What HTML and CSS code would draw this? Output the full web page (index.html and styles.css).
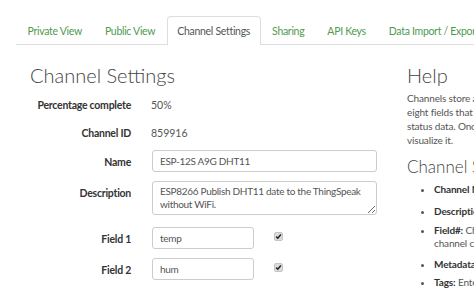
FILE: index.html
```html
<!DOCTYPE html>
<html>
<head>
<meta charset="utf-8">
<link rel="stylesheet" href="styles.css">
</head>
<body>
<div class="page">
  <nav class="tabs">
    <a class="tab">Private View</a>
    <a class="tab">Public View</a>
    <a class="tab active">Channel Settings</a>
    <a class="tab">Sharing</a>
    <a class="tab">API Keys</a>
    <a class="tab">Data Import / Export</a>
  </nav>
  <div class="main">
    <section class="settings">
      <h1 class="title">Channel Settings</h1>
      <div class="row static">
        <div class="label">Percentage complete</div>
        <div class="value">50%</div>
      </div>
      <div class="row static">
        <div class="label">Channel ID</div>
        <div class="value">859916</div>
      </div>
      <div class="row">
        <div class="label">Name</div>
        <div class="control"><input class="input wide" type="text" value="ESP-12S A9G DHT11"></div>
      </div>
      <div class="row tall">
        <div class="label">Description</div>
        <div class="control"><textarea class="input wide area">ESP8266 Publish DHT11 date to the ThingSpeak without WiFi.</textarea></div>
      </div>
      <div class="row">
        <div class="label">Field 1</div>
        <div class="control field">
          <input class="input short" type="text" value="temp">
          <span class="check"><svg width="9" height="9" viewBox="0 0 9 9"><rect x="0.5" y="0.5" width="8" height="8" rx="1.5" fill="#dcdcdc" stroke="#c4c4c4"/><path d="M2.2 4.6 L3.8 6.2 L6.9 2.6" fill="none" stroke="#222" stroke-width="1.5"/></svg></span>
        </div>
      </div>
      <div class="row">
        <div class="label">Field 2</div>
        <div class="control field">
          <input class="input short" type="text" value="hum">
          <span class="check"><svg width="9" height="9" viewBox="0 0 9 9"><rect x="0.5" y="0.5" width="8" height="8" rx="1.5" fill="#dcdcdc" stroke="#c4c4c4"/><path d="M2.2 4.6 L3.8 6.2 L6.9 2.6" fill="none" stroke="#222" stroke-width="1.5"/></svg></span>
        </div>
      </div>
    </section>
    <aside class="help">
      <h1 class="title">Help</h1>
      <p class="text">Channels store all the data that a ThingSpeak application collects. Each channel includes<br>eight fields that can hold any type of data, plus three fields for location data and one for<br>status data. Once you collect data in a channel, you can use ThingSpeak apps to analyze and<br>visualize it.</p>
      <h2 class="subtitle">Channel Settings</h2>
      <ul class="list">
        <li><b>Channel Name:</b> Enter a unique name for the ThingSpeak channel.</li>
        <li><b>Description:</b> Enter a description of the ThingSpeak channel.</li>
        <li><b>Field#:</b> Check the box to enable the field, and enter a field name. Each ThingSpeak<br>channel can have up to 8 fields.</li>
        <li><b>Metadata:</b> Enter information about channel data, including JSON, XML, or CSV data.</li>
        <li><b>Tags:</b> Enter keywords that identify the channel. Separate tags with commas.</li>
      </ul>
    </aside>
  </div>
</div>
</body>
</html>
```
FILE: styles.css
```css
html, body {
  margin: 0;
  padding: 0;
  background: #fff;
  overflow: hidden;
}
body {
  font-family: Lato, "Open Sans", sans-serif;
  color: #555;
  width: 474px;
  height: 293px;
}
.page {
  width: 900px;
}
.tabs {
  display: flex;
  margin: 16px 0 0 16px;
  border-bottom: 1px solid #ddd;
  height: 28px;
}
.tab {
  display: block;
  padding: 0 10.5px;
  line-height: 28px;
  font-size: 10.5px;
  letter-spacing: -0.3px;
  color: #4f9a4f;
  border: 1px solid transparent;
  border-bottom: 0;
  border-radius: 4px 4px 0 0;
  white-space: nowrap;
}
.tab.active {
  color: #555;
  background: #fff;
  border-color: #ddd;
  padding: 0 9.5px 1px 9.5px;
  margin: 0 0 -1px 0;
}
.main {
  display: flex;
  padding-left: 30px;
}
.settings {
  width: 377px;
  flex: none;
}
.title {
  margin: 18px 0 7px 0;
  font-size: 20px;
  line-height: 24px;
  font-weight: 300;
  color: #444;
}
.row {
  display: grid;
  grid-template-columns: 101px auto;
  column-gap: 20px;
  align-items: start;
  margin-bottom: 8px;
}
.row.static {
  margin-bottom: 6px;
}
.row.tall {
  margin-bottom: 12px;
}
.label {
  text-align: right;
  font-weight: 700;
  font-size: 10.5px;
  letter-spacing: -0.25px;
  line-height: 22px;
  color: #333;
  white-space: nowrap;
}
.row:not(.static) .label {
  padding-top: 1px;
}
.value {
  font-size: 10.5px;
  line-height: 22px;
  color: #555;
}
.control {
  display: flex;
  align-items: center;
  padding-left: 1px;
}
.input {
  box-sizing: border-box;
  height: 22px;
  border: 1px solid #ccc;
  border-radius: 3px;
  padding: 0 7px;
  font-family: Lato, "Open Sans", sans-serif;
  font-size: 10px;
  letter-spacing: -0.3px;
  color: #555;
  background: #fff;
  outline: none;
  margin: 0;
}
.wide {
  width: 225px;
}
.area {
  height: 34px;
  padding: 3px 7px;
  line-height: 13px;
  resize: vertical;
  display: block;
  overflow: hidden;
}
.short {
  width: 102px;
}
.check {
  display: block;
  width: 9px;
  height: 9px;
  margin-left: 20px;
  margin-top: -3px;
}
.check svg {
  display: block;
}
.help {
  width: 460px;
  flex: none;
}
.help .title {
  margin-bottom: 0;
}
.text {
  margin: 4px 0 0 0;
  font-size: 10px;
  letter-spacing: -0.15px;
  line-height: 14px;
  color: #555;
  white-space: nowrap;
}
.subtitle {
  margin: 10px 0 0 0;
  font-size: 17px;
  line-height: 20px;
  font-weight: 300;
  color: #444;
}
.list {
  margin: 6px 0 0 0;
  padding-left: 27px;
  font-size: 10px;
  letter-spacing: -0.15px;
  line-height: 13px;
  color: #555;
  white-space: nowrap;
}
.list li:nth-child(1) {
  margin-bottom: 9px;
}
.list li:nth-child(2) {
  margin-bottom: 6px;
}
.list li:nth-child(3) {
  margin-bottom: 8px;
}
.list li:nth-child(4) {
  margin-bottom: 5px;
}
.list b {
  color: #333;
  font-weight: 700;
}
```
